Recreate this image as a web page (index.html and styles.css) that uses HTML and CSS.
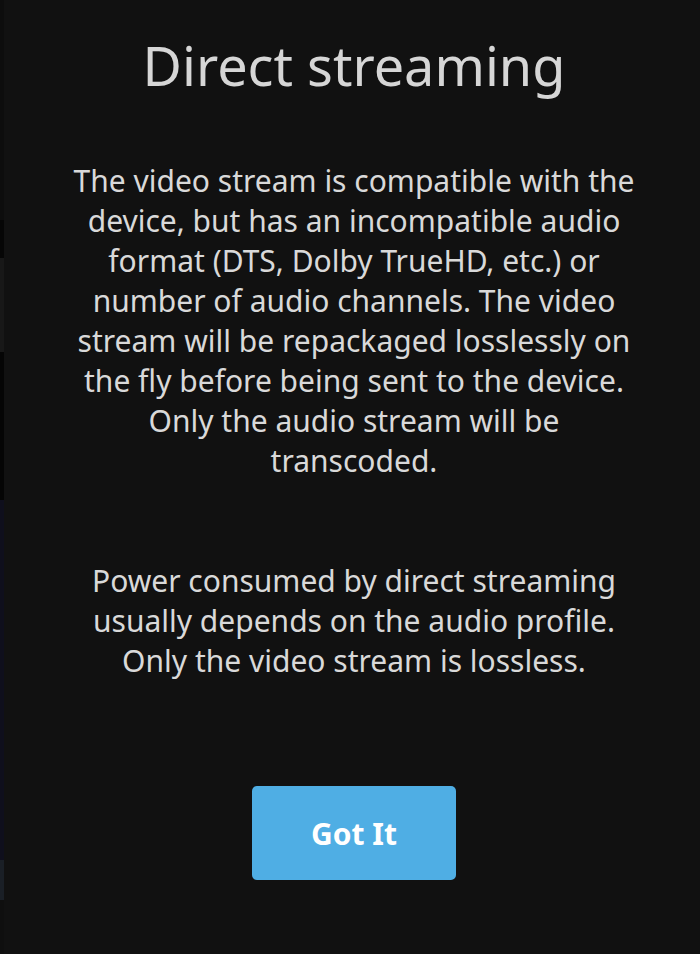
FILE: index.html
```html
<!DOCTYPE html>
<html lang="en">
<head>
<meta charset="utf-8">
<title>Direct streaming</title>
<link rel="stylesheet" href="styles.css">
</head>
<body>
<div class="page">
  <div class="backdrop">
    <div class="bd bd-1"></div>
    <div class="bd bd-2"></div>
    <div class="bd bd-3"></div>
    <div class="bd bd-4"></div>
    <div class="bd bd-5"></div>
    <div class="bd bd-6"></div>
    <div class="bd bd-7"></div>
  </div>
  <div class="modal">
    <h1 class="title">Direct streaming</h1>
    <p class="text">The video stream is compatible with the device, but has an incompatible audio format (DTS, Dolby TrueHD, etc.) or number of audio channels. The video stream will be repackaged losslessly on the fly before being sent to the device. Only the audio stream will be transcoded.</p>
    <p class="text text-2">Power consumed by direct streaming usually depends on the audio profile. Only the video stream is lossless.</p>
    <div class="actions">
      <button class="btn">Got It</button>
    </div>
  </div>
</div>
</body>
</html>
```
FILE: styles.css
```css
html, body {
  margin: 0;
  padding: 0;
  background: #111111;
}
body {
  font-family: "Noto Sans", "Open Sans", sans-serif;
}
.page {
  display: flex;
  width: 700px;
  height: 954px;
  overflow: hidden;
}
.backdrop {
  width: 4px;
  display: flex;
  flex-direction: column;
  flex-shrink: 0;
}
.bd-1 { height: 220px; background: #0d0d0d; }
.bd-2 { height: 38px; background: #060606; }
.bd-3 { height: 94px; background: #181818; }
.bd-4 { height: 148px; background: #050505; }
.bd-5 { height: 360px; background: #0f0f1c; }
.bd-6 { height: 40px; background: #1a1f26; }
.bd-7 { flex: 1; background: #0f0f0f; }
.modal {
  flex: 1;
  padding-left: 4px;
  background: #111111;
  display: flex;
  flex-direction: column;
  align-items: center;
  text-align: center;
  color: #d9d9d9;
}
.title {
  margin: 20px 0 0;
  font-weight: 400;
  font-size: 54px;
  line-height: 90px;
  color: #d6d6d6;
}
.text {
  margin: 51px 0 0;
  width: 570px;
  font-size: 30px;
  line-height: 40px;
}
.text-2 {
  margin-top: 80px;
}
.actions {
  margin-top: 105px;
}
.btn {
  width: 204px;
  height: 94px;
  border: none;
  border-radius: 5px;
  background: #4faee4;
  color: #ffffff;
  font-family: "Noto Sans", "Open Sans", sans-serif;
  font-weight: 700;
  font-size: 30px;
  cursor: pointer;
}
```
